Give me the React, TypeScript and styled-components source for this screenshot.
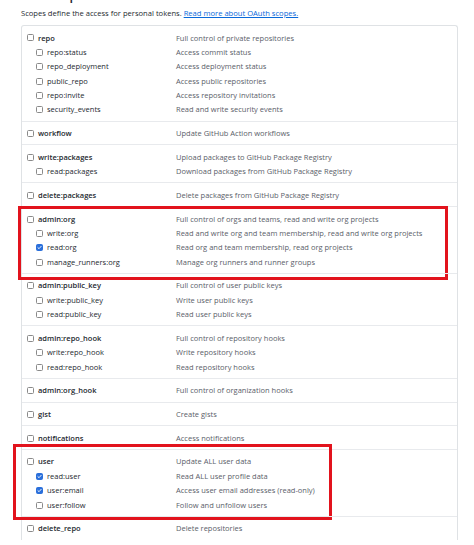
import React from "react";
import styled, { createGlobalStyle } from "styled-components";

const Global = createGlobalStyle`
  html, body { margin: 0; padding: 0; background: #ffffff; }
  body { font-family: "Open Sans", "Noto Sans", sans-serif; overflow: hidden; }
`;

const Page = styled.div`
  padding: 0 16px 0 21px;
  width: 474px;
  box-sizing: border-box;
`;

const Heading = styled.h3`
  margin: -10px 0 0;
  height: 12px;
  font-size: 10px;
  line-height: 12px;
  font-weight: 700;
  color: #24292f;
`;

const Intro = styled.p`
  margin: 6px 0 0;
  font-size: 7.6px;
  line-height: 10px;
  color: #24292f;
`;

const Link = styled.a`
  color: #0969da;
  text-decoration: underline;
`;

const Panel = styled.div`
  margin-top: 7px;
  border: 1px solid #dfe2e5;
  border-bottom: none;
  border-radius: 3px 3px 0 0;
  background: #fff;
`;

const Group = styled.div<{ $first?: boolean }>`
  position: relative;
  padding: 4.5px 0 3.8px;
  border-top: ${(p) => (p.$first ? "none" : "1px solid #e8eaed")};
`;

const Row = styled.label<{ $child?: boolean }>`
  display: grid;
  grid-template-columns: ${(p) => (p.$child ? "11px 129px" : "11px 138px")} 1fr;
  padding-left: ${(p) => (p.$child ? "14px" : "5px")};
  align-items: center;
  height: 14.4px;
  font-size: 7.5px;
  line-height: 14.4px;
  white-space: nowrap;
`;

const Box = styled.span<{ $checked?: boolean }>`
  width: 7px;
  height: 7px;
  box-sizing: border-box;
  border-radius: 1.5px;
  border: 1px solid ${(p) => (p.$checked ? "#2a6fdb" : "#8a8a8a")};
  background: ${(p) => (p.$checked ? "#2a6fdb" : "#fff")};
  display: flex;
  align-items: center;
  justify-content: center;
  margin-top: 0.5px;
`;

const Name = styled.span<{ $child?: boolean }>`
  color: #24292f;
  font-weight: ${(p) => (p.$child ? 400 : 600)};
`;

const Desc = styled.span`
  color: #5a6069;
`;

const Highlight = styled.div`
  position: absolute;
  border: 3.5px solid #e2131d;
  box-sizing: border-box;
  pointer-events: none;
`;

type Item = { name: string; desc: string; checked?: boolean };
type G = {
  parent: Item;
  children?: Item[];
  hl?: { top: number; left: number; width: number; height: number };
};

const groups: G[] = [
  {
    parent: { name: "repo", desc: "Full control of private repositories" },
    children: [
      { name: "repo:status", desc: "Access commit status" },
      { name: "repo_deployment", desc: "Access deployment status" },
      { name: "public_repo", desc: "Access public repositories" },
      { name: "repo:invite", desc: "Access repository invitations" },
      { name: "security_events", desc: "Read and write security events" },
    ],
  },
  { parent: { name: "workflow", desc: "Update GitHub Action workflows" } },
  {
    parent: { name: "write:packages", desc: "Upload packages to GitHub Package Registry" },
    children: [{ name: "read:packages", desc: "Download packages from GitHub Package Registry" }],
  },
  { parent: { name: "delete:packages", desc: "Delete packages from GitHub Package Registry" } },
  {
    parent: { name: "admin:org", desc: "Full control of orgs and teams, read and write org projects" },
    children: [
      { name: "write:org", desc: "Read and write org and team membership, read and write org projects" },
      { name: "read:org", desc: "Read org and team membership, read org projects", checked: true },
      { name: "manage_runners:org", desc: "Manage org runners and runner groups" },
    ],
    hl: { top: -1, left: -4, width: 430, height: 74 },
  },
  {
    parent: { name: "admin:public_key", desc: "Full control of user public keys" },
    children: [
      { name: "write:public_key", desc: "Write user public keys" },
      { name: "read:public_key", desc: "Read user public keys" },
    ],
  },
  {
    parent: { name: "admin:repo_hook", desc: "Full control of repository hooks" },
    children: [
      { name: "write:repo_hook", desc: "Write repository hooks" },
      { name: "read:repo_hook", desc: "Read repository hooks" },
    ],
  },
  { parent: { name: "admin:org_hook", desc: "Full control of organization hooks" } },
  { parent: { name: "gist", desc: "Create gists" } },
  { parent: { name: "notifications", desc: "Access notifications" } },
  {
    parent: { name: "user", desc: "Update ALL user data" },
    children: [
      { name: "read:user", desc: "Read ALL user profile data", checked: true },
      { name: "user:email", desc: "Access user email addresses (read-only)", checked: true },
      { name: "user:follow", desc: "Follow and unfollow users" },
    ],
    hl: { top: -6, left: -9, width: 319, height: 76 },
  },
  { parent: { name: "delete_repo", desc: "Delete repositories" } },
];

const Check = () => (
  <svg width="5" height="5" viewBox="0 0 10 10">
    <path d="M1.8 5.2 L4.1 7.4 L8.3 2.6" fill="none" stroke="#fff" strokeWidth="1.8" strokeLinecap="round" strokeLinejoin="round" />
  </svg>
);

const ScopeRow = ({ item, child }: { item: Item; child?: boolean }) => (
  <Row $child={child}>
    <Box $checked={item.checked}>{item.checked && <Check />}</Box>
    <Name $child={child}>{item.name}</Name>
    <Desc>{item.desc}</Desc>
  </Row>
);

export default function App() {
  return (
    <Page>
      <Global />
      <Heading>Select scopes</Heading>
      <Intro>
        Scopes define the access for personal tokens. <Link>Read more about OAuth scopes.</Link>
      </Intro>
      <Panel>
        {groups.map((g, i) => (
          <Group key={g.parent.name} $first={i === 0}>
            <ScopeRow item={g.parent} />
            {g.children?.map((c) => (
              <ScopeRow key={c.name} item={c} child />
            ))}
            {g.hl && (
              <Highlight
                style={{ top: g.hl.top, left: g.hl.left, width: g.hl.width, height: g.hl.height }}
              />
            )}
          </Group>
        ))}
      </Panel>
    </Page>
  );
}
